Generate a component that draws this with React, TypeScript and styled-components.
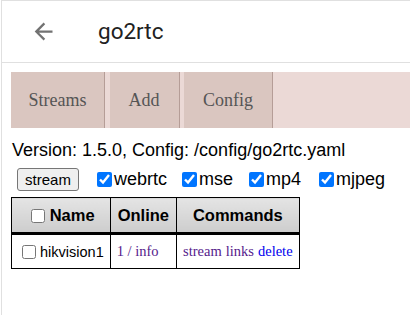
import styled, { createGlobalStyle } from 'styled-components';

const GlobalStyle = createGlobalStyle`
    html, body {
        margin: 0;
        padding: 0;
        background: #fff;
    }
`;

const StyledFrame = styled.div`
    width: 409px;
    height: 315px;
    margin-left: 1px;
    border-left: 1px solid #e0e0e0;
    box-sizing: border-box;
    overflow: hidden;
`;

const StyledToolbar = styled.header`
    display: flex;
    align-items: center;
    gap: 41px;
    height: 63px;
    box-sizing: border-box;
    padding-left: 28px;
    border-top: 1px solid #e0e0e0;
    border-bottom: 1px solid #e0e0e0;
    font-family: Roboto, 'Noto Sans', sans-serif;

    svg {
        flex: none;
    }
`;

const StyledTitle = styled.h1`
    margin: 0 0 1px;
    font-size: 22.5px;
    font-weight: 400;
    color: #212121;
`;

const StyledContent = styled.main`
    padding: 9px 0 0 9px;
    font-family: 'Liberation Sans', Arial, sans-serif;
    font-size: 18px;
    color: #000;
`;

const StyledTabBar = styled.nav`
    display: flex;
    gap: 4.5px;
    height: 56px;
    background: #ebd9d6;
`;

interface StyledTabProps {
    $pad: number;
}

const StyledTab = styled.button<StyledTabProps>`
    display: flex;
    align-items: center;
    padding: 0 ${props => props.$pad}px;
    border: none;
    border-right: 1px solid #b59d97;
    background: #dac6c0;
    color: #555;
    font-family: 'Liberation Serif', 'Times New Roman', serif;
    font-size: 18px;
    cursor: pointer;
`;

const StyledInfo = styled.p`
    margin: 12px 0 0 1px;
    line-height: 21px;
`;

const StyledControls = styled.div`
    display: flex;
    align-items: center;
    margin-top: 7px;
    padding-left: 6px;
    height: 23px;
`;

const StyledButton = styled.button`
    height: 23px;
    width: 62px;
    margin-right: 18px;
    padding: 0;
    font-family: 'Liberation Sans', Arial, sans-serif;
    font-size: 15px;
    color: #000;
    background: #efefef;
    border: 1px solid #767676;
    border-radius: 3px;
`;

interface StyledOptionProps {
    $gap: number;
}

const StyledOption = styled.label<StyledOptionProps>`
    display: flex;
    align-items: center;
    gap: 2px;
    margin-right: ${props => props.$gap}px;
    line-height: 21px;

    input {
        margin: 0;
        width: 15px;
        height: 15px;
    }
`;

const StyledTable = styled.table`
    margin-top: 6px;
    border-collapse: collapse;
    font-size: 14.5px;

    th, td {
        border: 1px solid #000;
        white-space: nowrap;
    }

    th {
        height: 34px;
        padding: 0 7px;
        font-size: 16.5px;
        background: linear-gradient(#e4e4e4, #cdcdcd);
        border-bottom: 3px solid #000;
    }

    td {
        height: 33px;
        padding: 0 6px;
    }

    input {
        margin: 0 0 0 4px;
        width: 14px;
        height: 14px;
        vertical-align: -2px;
    }
`;

interface StyledLinkProps {
    $visited?: boolean;
}

const StyledLink = styled.a<StyledLinkProps>`
    font-family: 'Liberation Serif', 'Times New Roman', serif;
    color: ${props => (props.$visited ? '#551a8b' : '#0000ee')};
    text-decoration: none;
`;

const StyledSerif = styled.span`
    font-family: 'Liberation Serif', 'Times New Roman', serif;
    color: #551a8b;
`;

const tabs = [
    { name: 'Streams', pad: 17.5 },
    { name: 'Add', pad: 19 },
    { name: 'Config', pad: 19 },
];

const options = [
    { name: 'webrtc', gap: 15 },
    { name: 'mse', gap: 16 },
    { name: 'mp4', gap: 18 },
    { name: 'mjpeg', gap: 0 },
];

function ArrowLeftIcon() {
    return (
        <svg width='27' height='27' viewBox='0 0 24 24' fill='#727272'>
            <path d='M20,11V13H8L13.5,18.5L12.08,19.92L4.16,12L12.08,4.08L13.5,5.5L8,11H20Z' />
        </svg>
    );
}

function App() {
    return (
        <>
            <GlobalStyle />
            <StyledFrame>
                <StyledToolbar>
                    <ArrowLeftIcon />
                    <StyledTitle>go2rtc</StyledTitle>
                </StyledToolbar>
                <StyledContent>
                    <StyledTabBar>
                        {tabs.map(tab => (
                            <StyledTab key={tab.name} $pad={tab.pad}>
                                {tab.name}
                            </StyledTab>
                        ))}
                    </StyledTabBar>
                    <StyledInfo>Version: 1.5.0, Config: /config/go2rtc.yaml</StyledInfo>
                    <StyledControls>
                        <StyledButton>stream</StyledButton>
                        {options.map(option => (
                            <StyledOption key={option.name} $gap={option.gap}>
                                <input type='checkbox' defaultChecked />
                                {option.name}
                            </StyledOption>
                        ))}
                    </StyledControls>
                    <StyledTable>
                        <thead>
                            <tr>
                                <th>
                                    <input type='checkbox' /> Name
                                </th>
                                <th>Online</th>
                                <th>Commands</th>
                            </tr>
                        </thead>
                        <tbody>
                            <tr>
                                <td>
                                    <input type='checkbox' /> hikvision1
                                </td>
                                <td>
                                    <StyledSerif>1 / </StyledSerif>
                                    <StyledLink href='#' $visited>
                                        info
                                    </StyledLink>
                                </td>
                                <td>
                                    <StyledLink href='#' $visited>
                                        stream
                                    </StyledLink>{' '}
                                    <StyledLink href='#' $visited>
                                        links
                                    </StyledLink>{' '}
                                    <StyledLink href='#'>delete</StyledLink>
                                </td>
                            </tr>
                        </tbody>
                    </StyledTable>
                </StyledContent>
            </StyledFrame>
        </>
    );
}

export default App;
